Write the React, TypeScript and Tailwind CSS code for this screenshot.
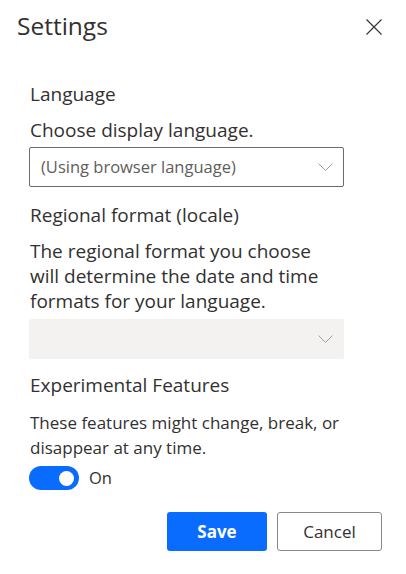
import React from "react";

export default function App() {
  return (
    <div className="w-[406px] h-[574px] bg-white text-[#323130] font-['Open_Sans',sans-serif] overflow-hidden">
      <div className="flex items-start justify-between pl-[17px] pr-[24px] pt-[10px]">
        <div className="text-[24.5px] leading-[32px]">Settings</div>
        <button className="mt-[9px] w-[16px] h-[16px] flex items-center justify-center text-[#323130]">
          <svg width="16" height="16" viewBox="0 0 16 16" fill="none" stroke="currentColor" strokeWidth="1.1">
            <path d="M0.5 0.5 L15.5 15.5 M15.5 0.5 L0.5 15.5" />
          </svg>
        </button>
      </div>

      <div className="flex flex-col pl-[30px] pr-[40px]">
        <div className="mt-[40px] text-[19px] leading-[25px] font-medium">Language</div>
        <div className="mt-[11px] text-[19px] leading-[25px] font-medium">Choose display language.</div>
        <div className="mt-[4px] -ml-[1px] h-[40px] w-[315px] border border-[#6b6b6b] rounded-[2px] flex items-center justify-between pl-[11px] pr-[10px]">
          <span className="text-[16.5px] text-[#605e5c]">(Using browser language)</span>
          <Chevron />
        </div>
        <div className="mt-[16px] text-[19px] leading-[25px] font-medium">Regional format (locale)</div>
        <div className="mt-[11px] text-[19px] leading-[25px] font-medium whitespace-nowrap">
          The regional format you choose
          <br />
          will determine the date and time
          <br />
          formats for your language.
        </div>
        <div className="mt-[5px] -ml-[1px] h-[40px] w-[315px] bg-[#f3f2f1] rounded-[2px] flex items-center justify-end pr-[11px]">
          <Chevron />
        </div>
        <div className="mt-[14px] text-[19px] leading-[25px] font-medium">Experimental Features</div>
        <div className="mt-[12px] text-[17px] leading-[25px] font-medium whitespace-nowrap">
          These features might change, break, or
          <br />
          disappear at any time.
        </div>
        <div className="mt-[6px] flex items-center">
          <div className="-ml-[1px] w-[50px] h-[24px] rounded-full bg-[#0a6cff] flex items-center justify-end pr-[5px]">
            <div className="w-[15px] h-[15px] rounded-full bg-white" />
          </div>
          <span className="ml-[10px] text-[16.5px] text-[#323130]">On</span>
        </div>
      </div>

      <div className="flex justify-end gap-[10px] pr-[24px] mt-[21px]">
        <button className="w-[100px] h-[39px] rounded-[3px] bg-[#0a6cff] text-white text-[17px] font-bold">
          Save
        </button>
        <button className="w-[105px] h-[39px] rounded-[3px] border border-[#8a8886] bg-white text-[#323130] text-[17px] font-medium">
          Cancel
        </button>
      </div>
    </div>
  );
}

function Chevron() {
  return (
    <svg width="15" height="8" viewBox="0 0 15 8" fill="none" stroke="#a19f9d" strokeWidth="1">
      <path d="M0.5 0.5 L7.5 7.5 L14.5 0.5" />
    </svg>
  );
}
